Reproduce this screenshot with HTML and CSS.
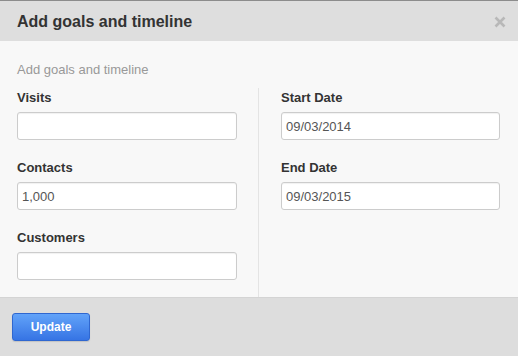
FILE: index.html
```html
<!DOCTYPE html>
<html lang="en">
<head>
<meta charset="utf-8">
<title>Add goals and timeline</title>
<link rel="stylesheet" href="styles.css">
</head>
<body>
<div class="modal">
  <div class="modal-header">
    <h3 class="modal-title">Add goals and timeline</h3>
    <button class="close" type="button" aria-label="Close">
      <svg width="12" height="12" viewBox="0 0 12 12"><path d="M1.5 1.5 L10.5 10.5 M10.5 1.5 L1.5 10.5" stroke="#b8b8b8" stroke-width="2.6" fill="none"/></svg>
    </button>
  </div>
  <div class="modal-body">
    <p class="intro">Add goals and timeline</p>
    <div class="columns">
      <div class="col col-left">
        <div class="field">
          <label class="field-label">Visits</label>
          <input class="field-input" type="text" value="">
        </div>
        <div class="field">
          <label class="field-label">Contacts</label>
          <input class="field-input" type="text" value="1,000">
        </div>
        <div class="field">
          <label class="field-label">Customers</label>
          <input class="field-input" type="text" value="">
        </div>
      </div>
      <div class="col col-right">
        <div class="field">
          <label class="field-label">Start Date</label>
          <input class="field-input" type="text" value="09/03/2014">
        </div>
        <div class="field">
          <label class="field-label">End Date</label>
          <input class="field-input" type="text" value="09/03/2015">
        </div>
      </div>
    </div>
  </div>
  <div class="modal-footer">
    <button class="btn-primary" type="button">Update</button>
  </div>
</div>
</body>
</html>
```
FILE: styles.css
```css
* { box-sizing: border-box; }

html, body {
  margin: 0;
  padding: 0;
  background: #f8f8f8;
}

body {
  font-family: "Liberation Sans", Arial, sans-serif;
  color: #333;
}

.modal {
  width: 518px;
  height: 356px;
  display: flex;
  flex-direction: column;
  background: #f8f8f8;
}

.modal-header {
  height: 41px;
  border-top: 1px solid #8c8c8c;
  background: #dedede;
  display: flex;
  align-items: center;
  justify-content: space-between;
  padding: 1px 12px 0 17px;
}

.modal-title {
  margin: 0;
  font-size: 16px;
  font-weight: bold;
  line-height: 20px;
  color: #333;
}

.close {
  border: 0;
  background: none;
  padding: 0;
  width: 12px;
  height: 12px;
  display: flex;
  cursor: pointer;
}

.modal-body {
  flex: 1;
  background: #f8f8f8;
  padding: 21px 18px 0 17px;
  display: flex;
  flex-direction: column;
}

.intro {
  margin: 0 0 10px;
  font-size: 13px;
  line-height: 16px;
  color: #999;
}

.columns {
  flex: 1;
  display: grid;
  grid-template-columns: 241px 1fr;
}

.col {
  display: flex;
  flex-direction: column;
  gap: 18px;
  padding-bottom: 17px;
}

.col-right {
  border-left: 1px solid #e4e4e4;
  padding-left: 22px;
}

.field {
  display: flex;
  flex-direction: column;
}

.field-label {
  font-size: 13px;
  font-weight: bold;
  line-height: 20px;
  margin-bottom: 4px;
  color: #333;
}

.field-input {
  width: 220px;
  height: 28px;
  border: 1px solid #cccccc;
  border-radius: 3px;
  background: #fff;
  box-shadow: inset 0 1px 1px rgba(0, 0, 0, 0.06);
  padding: 0 4px;
  font-family: "Liberation Sans", Arial, sans-serif;
  font-size: 13px;
  color: #555;
  outline: none;
}

.col-right .field-input {
  width: 219px;
}

.modal-footer {
  height: 59px;
  border-top: 1px solid #d4d4d4;
  background: #dddddd;
  padding: 15px 12px 0;
  display: flex;
  align-items: flex-start;
}

.btn-primary {
  width: 78px;
  height: 28px;
  border: 1px solid #2f67d0;
  border-radius: 3px;
  background: linear-gradient(#62a3f9, #3674e4);
  box-shadow: 0 1px 1px rgba(0, 0, 0, 0.12);
  color: #fff;
  font-family: "Liberation Sans", Arial, sans-serif;
  font-size: 12px;
  font-weight: bold;
  padding: 0;
  cursor: pointer;
}
```
